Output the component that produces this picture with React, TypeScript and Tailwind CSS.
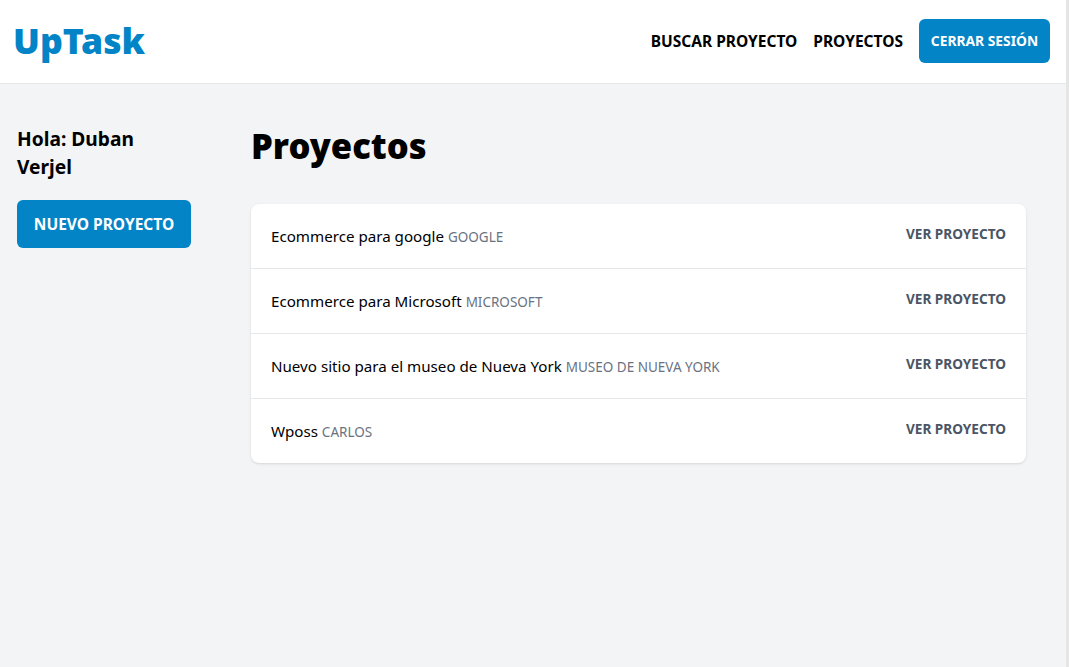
const projects = [
  { name: "Ecommerce para google", client: "GOOGLE" },
  { name: "Ecommerce para Microsoft", client: "MICROSOFT" },
  { name: "Nuevo sitio para el museo de Nueva York", client: "MUSEO DE NUEVA YORK" },
  { name: "Wposs", client: "CARLOS" },
];

export default function App() {
  return (
    <div className="flex h-[667px] overflow-hidden bg-[#e5e5e5] font-['Noto_Sans','Open_Sans',sans-serif] text-black">
      <div className="flex-1 bg-gray-100">
        <header className="flex h-[84px] items-center justify-between border-b border-gray-200 bg-white pb-[2px] pl-[13px] pr-[16px]">
          <h2 className="text-[35.6px] font-black text-[#0284c7]">UpTask</h2>
          <div className="flex items-center gap-4">
            <a className="pt-[2px] text-[15.5px] font-bold uppercase">Buscar Proyecto</a>
            <a className="pt-[2px] text-[15.5px] font-bold uppercase">Proyectos</a>
            <button className="h-11 w-[131px] rounded-md bg-[#0284c7] pt-[2px] text-[13.8px] font-bold uppercase text-white">Cerrar Sesión</button>
          </div>
        </header>
        <div className="flex">
          <aside className="w-[251px] pl-[17px] pt-[41px]">
            <p className="w-[150px] text-[19.2px] leading-[28px] font-bold">Hola: Duban Verjel</p>
            <button className="mt-[19px] h-12 w-[174px] rounded-md bg-[#0284c7] pt-[2px] text-[15.5px] font-bold uppercase text-white">Nuevo Proyecto</button>
          </aside>
          <main className="flex-1 pr-10 pt-[39px]">
            <h1 className="text-[34.6px] leading-[46px] font-black">Proyectos</h1>
            <ul className="mt-[35px] rounded-lg bg-white shadow">
              {projects.map((p) => (
                <li key={p.name} className="flex h-[65px] justify-between border-b border-gray-200 px-5 pt-5 last:h-[64px] last:border-b-0">
                  <p className="text-[15.15px] leading-6">
                    {p.name} <span className="text-[13.5px] uppercase text-gray-500">{p.client}</span>
                  </p>
                  <a className="text-[13.6px] leading-5 font-bold uppercase text-gray-600">Ver Proyecto</a>
                </li>
              ))}
            </ul>
          </main>
        </div>
      </div>
      <div className="w-[3px] bg-[#e5e5e5]" />
    </div>
  );
}
